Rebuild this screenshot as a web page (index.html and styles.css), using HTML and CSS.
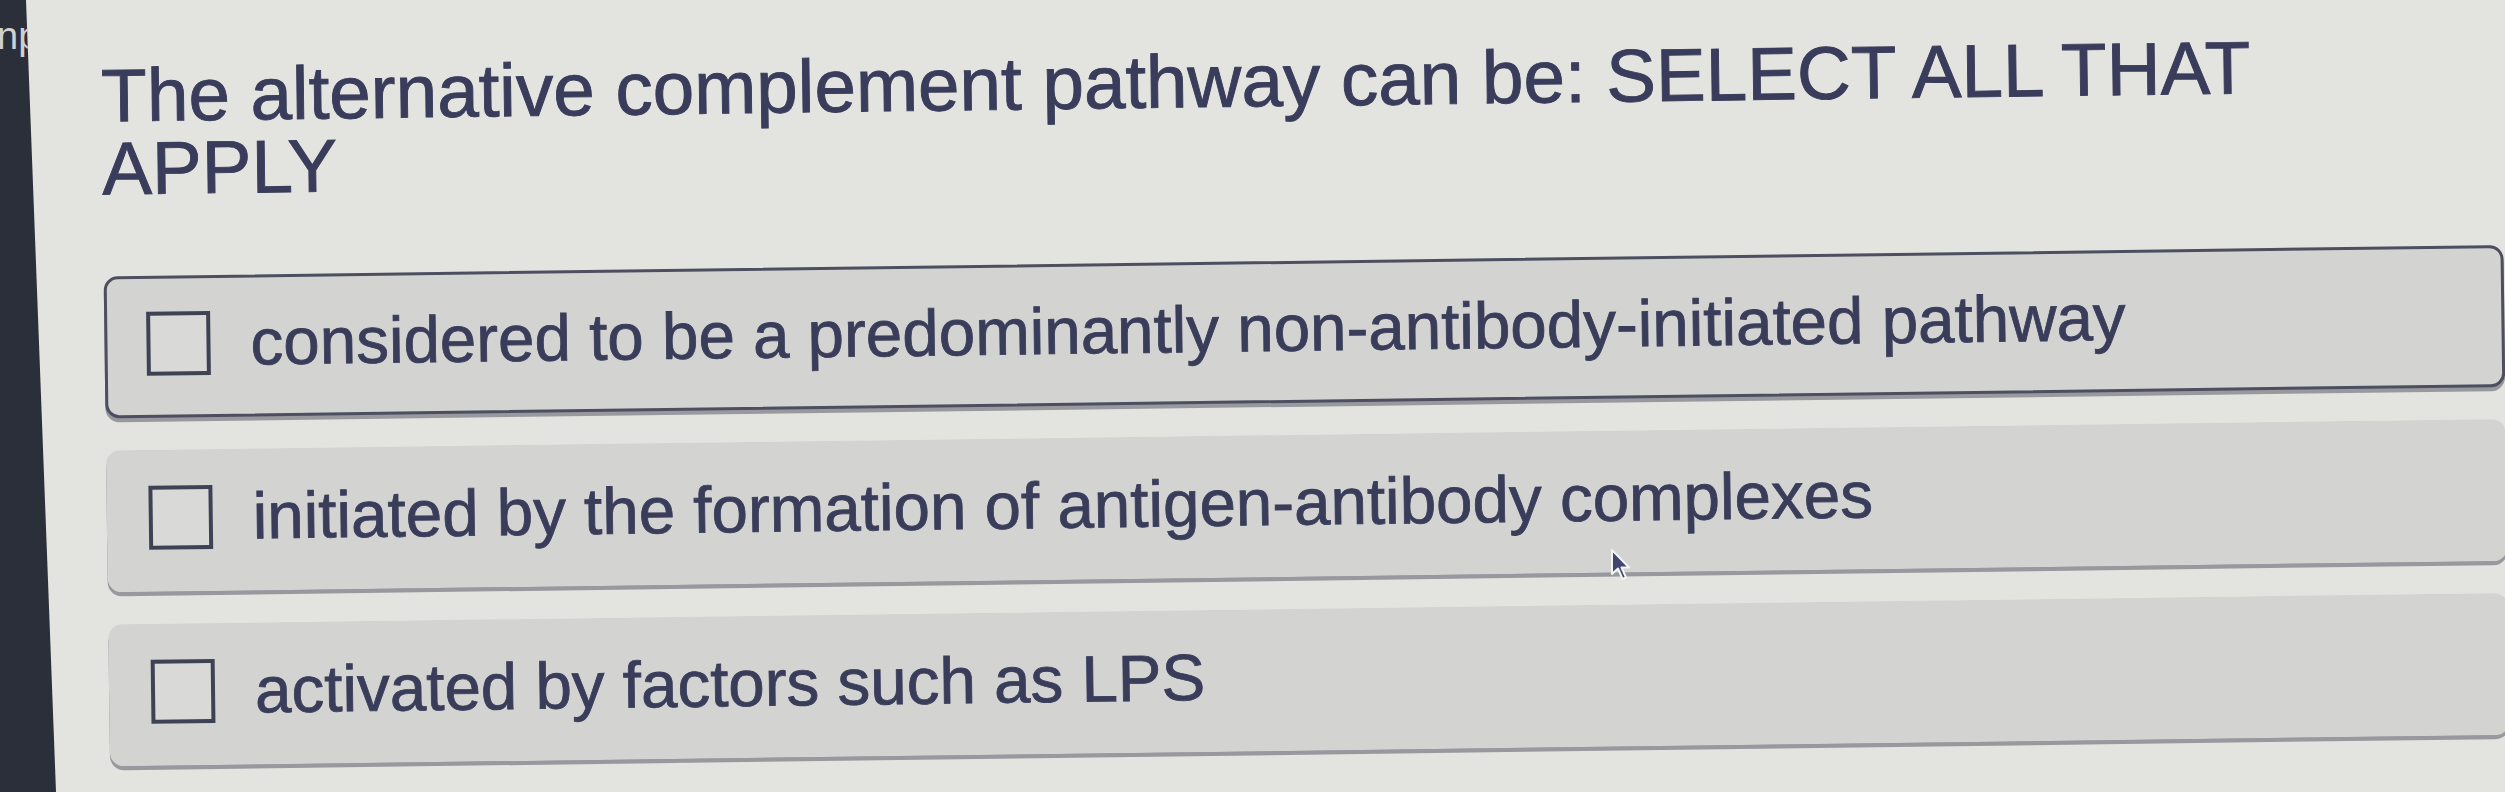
FILE: index.html
```html
<!DOCTYPE html>
<html lang="en">
<head>
  <meta charset="UTF-8">
  <meta name="viewport" content="width=device-width, initial-scale=1">
  <title>Question</title>
  <link rel="stylesheet" href="styles.css">
</head>
<body>
  <div class="screen">
    <aside class="side">
      <span class="side-label">np</span>
    </aside>

    <main class="question">
      <h1 class="prompt">The alternative complement pathway can be: SELECT ALL THAT APPLY</h1>
      <ul class="choices">
        <li class="choice focused">
          <span class="check"></span>
          <span class="label">considered to be a predominantly non-antibody-initiated pathway</span>
        </li>
        <li class="choice">
          <span class="check"></span>
          <span class="label">initiated by the formation of antigen-antibody complexes</span>
        </li>
        <li class="choice">
          <span class="check"></span>
          <span class="label">activated by factors such as LPS</span>
        </li>
      </ul>
    </main>

    <svg class="pointer" width="22" height="34" viewBox="0 0 22 34">
      <path d="M2 2 L2 26 L8 20.5 L12.5 31 L16 29.5 L11.5 19.5 L19 19.5 Z" fill="#3f4670" stroke="#f4f4f2" stroke-width="2" stroke-linejoin="round"/>
    </svg>
  </div>
</body>
</html>
```

FILE: styles.css
```css
html, body {
  margin: 0;
  padding: 0;
}

body {
  font-family: "Liberation Sans", Arial, sans-serif;
  background-color: #e3e3df;
  color: #3a3d5a;
  width: 2505px;
  height: 792px;
  overflow: hidden;
}

.screen {
  position: relative;
  display: flex;
  height: 792px;
}

/* dark bezel on the left, wider at the bottom */
.side {
  flex: 0 0 56px;
  background-color: #2b2f3a;
  clip-path: polygon(0 0, 26px 0, 56px 100%, 0 100%);
  overflow: hidden;
}

.side-label {
  display: block;
  margin: 17px 0 0 -3px;
  font-size: 38px;
  line-height: 38px;
  color: #cfd0d0;
}

.question {
  flex: 1;
  padding: 60px 5px 0 44px;
  transform: rotate(-0.75deg);
  transform-origin: 0 0;
}

.prompt {
  margin: 0;
  padding-right: 100px;
  font-size: 74.6px;
  font-weight: normal;
  line-height: 73px;
  color: #393c5a;
  -webkit-text-stroke: 0.9px #393c5a;
}

.choices {
  list-style: none;
  margin: 71px 0 0;
  padding: 0;
  display: flex;
  flex-direction: column;
  gap: 32px;
}

.choice {
  display: flex;
  align-items: center;
  height: 142px;
  box-sizing: border-box;
  padding: 0 0 6px 39px;
  background-color: #d3d4d2;
  border: 3px solid transparent;
  border-radius: 14px;
  box-shadow: 0 4px 0 #98989e;
}

.choice.focused {
  border-color: #4d4f60;
}

.check {
  flex: 0 0 auto;
  width: 64px;
  height: 64px;
  box-sizing: border-box;
  border: 4px solid #3f4255;
  background-color: #d9dad7;
  margin-right: 40px;
}

.label {
  font-size: 65.5px;
  line-height: 76px;
  color: #3a3d5a;
  -webkit-text-stroke: 0.8px #3a3d5a;
}

.pointer {
  position: absolute;
  left: 1610px;
  top: 548px;
}
```
